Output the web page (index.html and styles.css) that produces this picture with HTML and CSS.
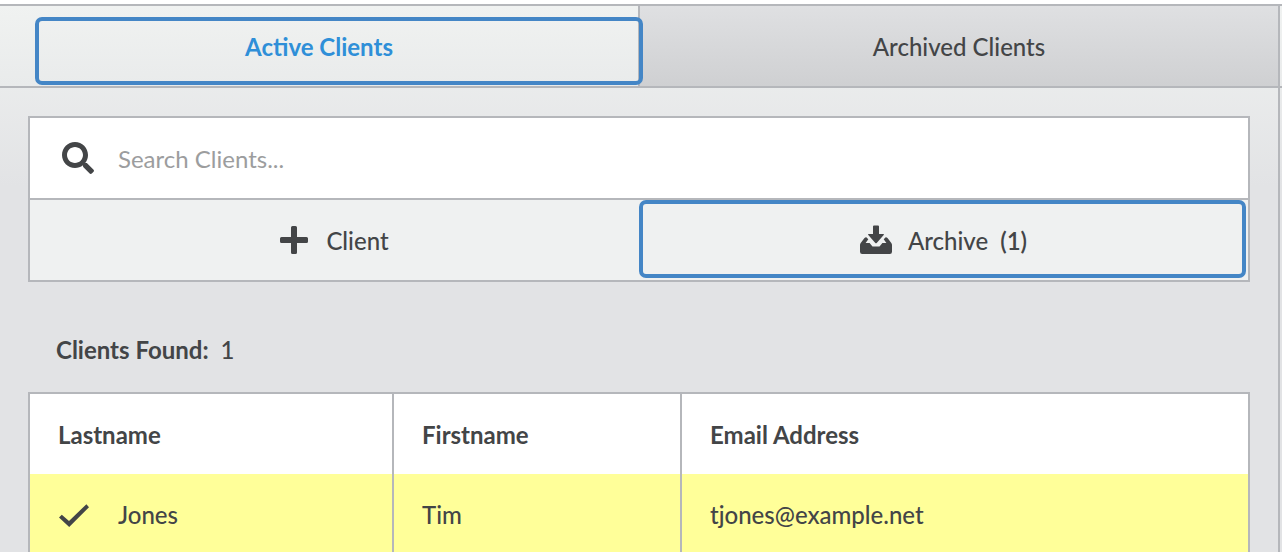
FILE: index.html
```html
<!DOCTYPE html>
<html lang="en">
<head>
<meta charset="utf-8">
<title>Clients</title>
<link rel="stylesheet" href="styles.css">
</head>
<body>
<main class="pane">
  <nav class="tabs">
    <button class="tab tab-active" type="button">Active Clients</button>
    <button class="tab" type="button">Archived Clients</button>
  </nav>
  <div class="content">
    <section class="tools">
      <label class="search">
        <svg class="icon" viewBox="0 0 512 512" aria-hidden="true"><path d="M505 442.700L405.300 343c-4.500-4.500-10.600-7-17-7H372c27.600-35.300 44-79.700 44-128C416 93.100 322.900 0 208 0S0 93.100 0 208s93.100 208 208 208c48.300 0 92.700-16.400 128-44v16.300c0 6.400 2.500 12.500 7 17l99.700 99.700c9.400 9.400 24.600 9.400 33.900 0l28.300-28.300c9.400-9.400 9.400-24.600.1-34zM208 336c-70.700 0-128-57.200-128-128 0-70.700 57.200-128 128-128 70.700 0 128 57.200 128 128 0 70.700-57.200 128-128 128z"/></svg>
        <input class="search-input" type="text" placeholder="Search Clients..." aria-label="Search Clients">
      </label>
      <div class="actions">
        <button class="action" type="button">
          <svg class="icon icon-plus" viewBox="0 0 28 28" aria-hidden="true"><path d="M12.500 0h3Q17 0 17 1.500V11h9.500Q28 11 28 12.500v3Q28 17 26.500 17H17v9.500Q17 28 15.500 28h-3Q11 28 11 26.500V17H1.500Q0 17 0 15.500v-3Q0 11 1.500 11H11V1.500Q11 0 12.500 0z"/></svg>
          <span class="label">Client</span>
        </button>
        <button class="action action-focus" type="button">
          <svg class="icon" viewBox="0 0 32 32" aria-hidden="true"><path d="M14 1.500h4q1 0 1 1V10h4.300q1.200 0 .4 1L16.700 19q-.7.700-1.400 0L8.300 11q-.8-1 .4-1H13V2.500q0-1 1-1z"/><path d="M6.300 13.200 8.300 15.300 5.600 19H9.600L12.500 22.600h7L22.400 19h4L23.700 15.300l2-2.100q1.300.1 2 1.100L31.300 19q.7 1 .7 2v6.800q0 2.200-2.200 2.200H2.200Q0 30 0 27.800V21q0-1 .7-2l3.600-4.700q.7-1 2-1.100z"/></svg>
          <span class="label">Archive</span><span class="label count">(1)</span>
        </button>
      </div>
    </section>
    <p class="found"><strong class="found-label">Clients Found:</strong><span>1</span></p>
    <table class="clients">
      <thead>
        <tr><th class="col-last">Lastname</th><th class="col-first">Firstname</th><th>Email Address</th></tr>
      </thead>
      <tbody>
        <tr class="selected">
          <td><span class="name"><svg class="icon" viewBox="0 0 32 32" aria-hidden="true"><path d="M1 18.500 3.800 15.700 11 22 28.400 5.200 31 8.200 11.200 28z"/></svg>Jones</span></td>
          <td>Tim</td>
          <td>tjones@example.net</td>
        </tr>
      </tbody>
    </table>
  </div>
</main>
</body>
</html>
```
FILE: styles.css
```css
* { box-sizing: border-box; }

html { overflow: hidden; }

body {
  margin: 0;
  padding-top: 4px;
  background: #fff;
  color: #434547;
  font: 500 24px/32px Lato, "Open Sans", sans-serif;
}

button, input { font: inherit; color: inherit; }

.pane {
  min-height: calc(100vh - 4px);
  padding-right: 2px;
  border-top: 2px solid #b5b7bb;
  background: linear-gradient(#f0f2f1, #e2e3e5 180px);
}

.tabs {
  display: flex;
  margin-right: -2px;
  padding-right: 2px;
  border-bottom: 2px solid #b5b7bb;
}

.tab {
  flex: 1;
  height: 80px;
  padding: 2px 0 0;
  border: 0;
  border-right: 2px solid #b5b7bb;
  background: linear-gradient(#dfe0e2, #cfd0d2);
}

.tab-active {
  position: relative;
  background: linear-gradient(#f0f2f1, #e9ebeb);
  color: #2f8fd8;
  font-weight: 700;
}

.tab-active::after,
.action-focus::after {
  content: "";
  position: absolute;
  border: 4px solid #4486c6;
  border-radius: 7px;
}

.tab-active::after { inset: 11px -5px 1px 35px; }

.content {
  min-height: calc(100vh - 88px);
  padding: 28px 28px 0;
  border-right: 2px solid #b5b7bb;
}

.tools {
  border: 2px solid #b5b7bb;
  background: #fff;
}

.search {
  display: flex;
  align-items: center;
  gap: 24px;
  height: 80px;
  padding: 0 32px;
}

.search-input {
  flex: 1;
  min-width: 0;
  padding: 2px 0 0;
  border: 0;
  outline: 0;
  background: none;
}

.search-input::placeholder { color: #9c9d9e; opacity: 1; font-weight: 400; }

.icon {
  flex: none;
  width: 32px;
  height: 32px;
  fill: #434547;
}

.icon-plus { width: 28px; height: 28px; }

.actions {
  display: flex;
  border-top: 2px solid #b5b7bb;
}

.action {
  display: flex;
  flex: 1;
  align-items: center;
  justify-content: center;
  gap: 18px;
  height: 80px;
  padding: 0;
  border: 0;
  background: #eff1f1;
}

.action-focus { position: relative; gap: 16px; }
.action-focus::after { inset: 0 2px 2px 0; }
.label { padding-top: 2px; }
.count { margin-left: -4px; font-weight: 600; }

.found {
  display: flex;
  gap: 12px;
  margin: 52px 0 26px;
  padding: 0 28px;
}

.found-label { font-weight: 700; }

.clients {
  width: 100%;
  border: 2px solid #b5b7bb;
  border-spacing: 0;
  table-layout: fixed;
  background: #fff;
}

.clients th, .clients td {
  height: 80px;
  padding: 2px 28px 0;
  text-align: left;
}

.clients th { font-weight: 700; }

.clients th + th, .clients td + td { border-left: 2px solid #b5b7bb; }

.col-last { width: 362px; }
.col-first { width: 288px; }
.selected { background: #ffff99; }

.name {
  display: flex;
  align-items: center;
  gap: 28px;
}
```
